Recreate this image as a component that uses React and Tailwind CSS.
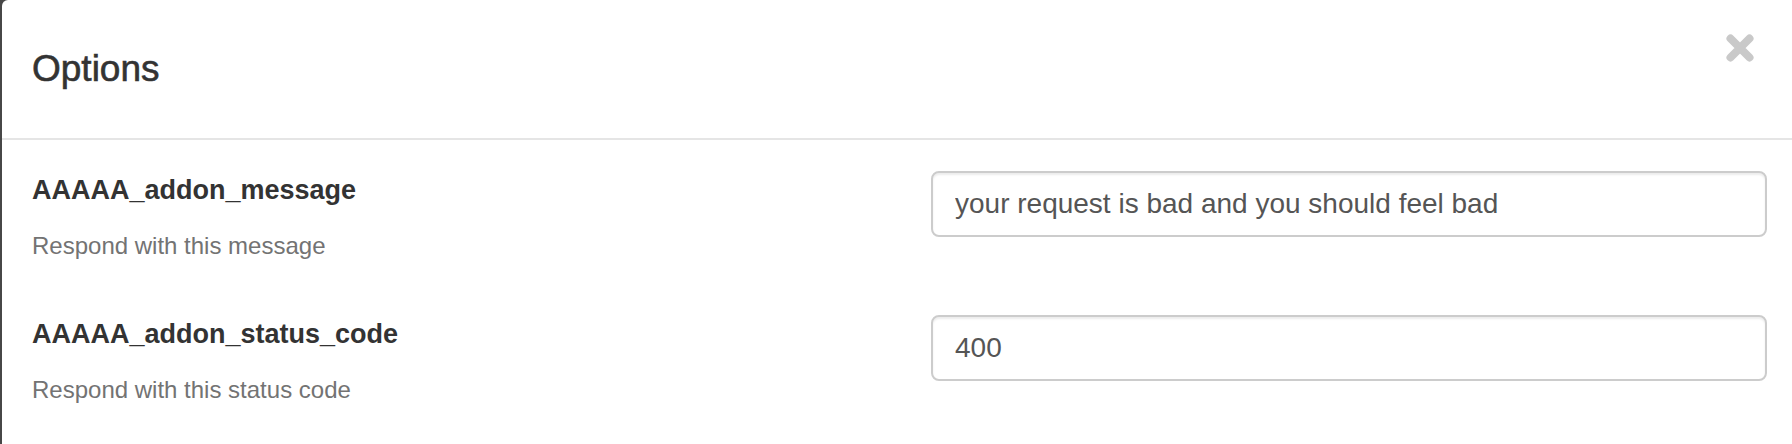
const options = [
  {
    name: 'AAAAA_addon_message',
    help: 'Respond with this message',
    value: 'your request is bad and you should feel bad',
  },
  {
    name: 'AAAAA_addon_status_code',
    help: 'Respond with this status code',
    value: '400',
  },
]

function CloseIcon() {
  return (
    <svg width="28" height="28" viewBox="0 0 28 28" fill="none">
      <path
        d="M4.5 4.5 L23.5 23.5 M23.5 4.5 L4.5 23.5"
        stroke="#c9c9c9"
        strokeWidth="8"
        strokeLinecap="round"
      />
    </svg>
  )
}

export default function App() {
  return (
    <div className="flex h-[444px] w-full bg-[#474747] font-['Liberation_Sans',Arial,sans-serif] overflow-hidden">
      <div className="ml-[2px] flex-1 bg-white rounded-tl-[6px]">
        {/* header */}
        <div className="flex items-start justify-between border-b-2 border-[#e5e5e5] pl-[30px] pr-[38px]">
          <h4 className="pt-[43px] pb-[44px] text-[37px] leading-[51px] font-normal text-[#333333] [-webkit-text-stroke:0.6px_#333333]">
            Options
          </h4>
          <button className="mt-[34px] cursor-pointer">
            <CloseIcon />
          </button>
        </div>

        {/* body */}
        <div className="flex flex-col gap-[53px] pt-[30px] pl-[30px] pr-[25px]">
          {options.map((opt) => (
            <div key={opt.name} className="flex items-start">
              <div className="flex-1">
                <div className="text-[27px] leading-[40px] font-bold text-[#333333]">{opt.name}</div>
                <div className="mt-[21px] text-[24px] leading-[30px] text-[#737373]">{opt.help}</div>
              </div>
              <input
                readOnly
                value={opt.value}
                className="mt-[1px] h-[66px] w-[836px] rounded-[8px] border-2 border-[#cccccc] bg-white px-[22px] text-[28px] text-[#555555] shadow-[inset_0_2px_2px_rgba(0,0,0,0.075)] outline-none"
              />
            </div>
          ))}
        </div>
      </div>
    </div>
  )
}
